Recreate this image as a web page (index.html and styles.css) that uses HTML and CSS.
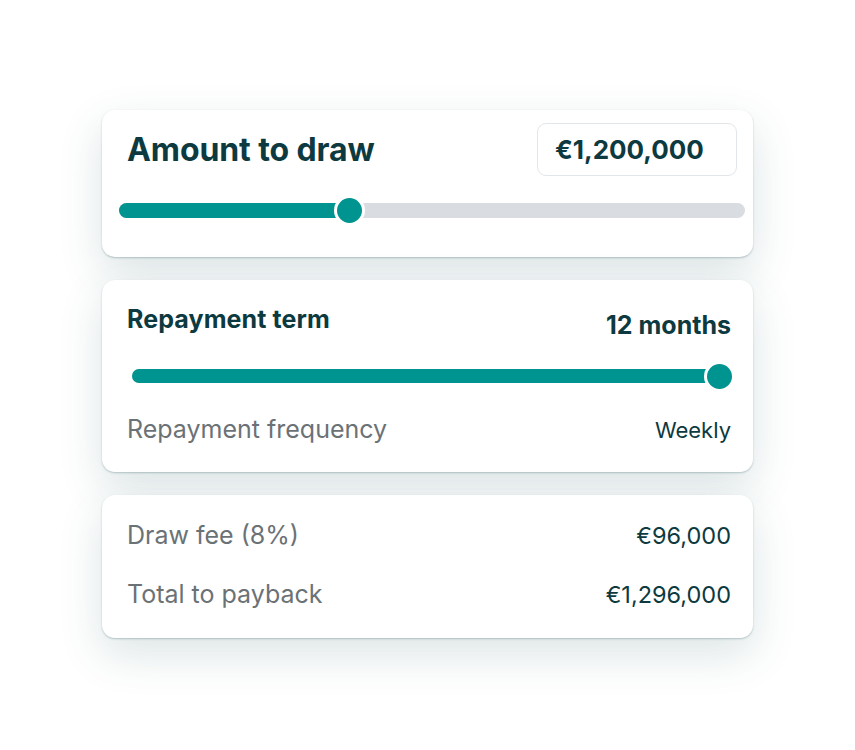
FILE: index.html
```html
<!DOCTYPE html>
<html lang="en">
<head>
    <meta charset="UTF-8">
    <meta name="viewport" content="width=device-width, initial-scale=1.0">
    <title>Draw calculator</title>
    <link rel="stylesheet" href="styles.css">
</head>
<body>
    <div class="calculator">
        <div class="card card-amount">
            <div class="amount-head">
                <h1 class="amount-title">Amount to draw</h1>
                <div class="amount-box">€1,200,000</div>
            </div>
            <div class="slider">
                <div class="slider-fill" style="width: 36.8%"></div>
                <div class="slider-thumb" style="left: 36.8%"></div>
            </div>
        </div>

        <div class="card card-term">
            <div class="term-head">
                <h2 class="term-title">Repayment term</h2>
                <div class="term-value">12 months</div>
            </div>
            <div class="slider slider-term">
                <div class="slider-fill" style="width: 100%"></div>
                <div class="slider-thumb" style="left: calc(100% - 12px)"></div>
            </div>
            <div class="row row-frequency">
                <span class="row-label">Repayment frequency</span>
                <span class="row-value">Weekly</span>
            </div>
        </div>

        <div class="card card-summary">
            <div class="row">
                <span class="row-label">Draw fee (8%)</span>
                <span class="row-value row-money">€96,000</span>
            </div>
            <div class="row">
                <span class="row-label">Total to payback</span>
                <span class="row-value row-money">€1,296,000</span>
            </div>
        </div>
    </div>
</body>
</html>
```

FILE: styles.css
```css
body {
    margin: 0;
    background-color: #ffffff;
    font-family: Inter, "Noto Sans", sans-serif;
    color: #0d3a40;
}
.calculator {
    width: 651px;
    margin-left: 102px;
    padding: 110px 0 113px;
    display: flex;
    flex-direction: column;
    gap: 23px;
}
.card {
    background-color: #ffffff;
    border-radius: 13px;
    box-shadow: 0 1px 2px rgba(40, 90, 95, 0.3), 0 16px 44px rgba(40, 90, 95, 0.16);
}
.card-amount {
    padding: 13px 8px 39px 17px;
}
.amount-head {
    display: flex;
    justify-content: space-between;
    align-items: center;
    padding: 0 8px;
    margin-bottom: 27px;
}
.amount-title {
    margin: 0;
    font-size: 32px;
    line-height: 1;
    font-weight: 700;
    letter-spacing: -0.1px;
}
.amount-box {
    width: 200px;
    height: 53px;
    box-sizing: border-box;
    border: 1px solid #e3e6e8;
    border-radius: 9px;
    padding-left: 17px;
    display: flex;
    align-items: center;
    font-size: 26px;
    line-height: 1;
    font-weight: 700;
}
.slider {
    position: relative;
    height: 15px;
    border-radius: 8px;
    background-color: #d9dde1;
}
.slider-fill {
    height: 100%;
    border-radius: 8px;
    background-color: #009490;
}
.slider-thumb {
    position: absolute;
    top: 50%;
    width: 25px;
    height: 25px;
    margin: -15.5px 0 0 -15.5px;
    border: 3px solid #ffffff;
    border-radius: 50%;
    background-color: #009490;
}
.card-term {
    padding: 27px 22px 30px 25px;
}
.term-head {
    display: flex;
    justify-content: space-between;
    align-items: flex-start;
}
.term-title {
    margin: 0;
    font-size: 25px;
    line-height: 1;
    font-weight: 700;
    letter-spacing: 0.1px;
}
.term-value {
    margin-top: 6px;
    font-size: 25px;
    line-height: 1;
    font-weight: 700;
}
.slider-term {
    height: 14px;
    margin: 31px 0 0 5px;
}
.row {
    display: flex;
    justify-content: space-between;
    align-items: baseline;
    line-height: 1;
}
.row-frequency {
    margin-top: 34px;
}
.row-label {
    font-size: 25px;
    color: #6b7276;
}
.row-value {
    font-size: 22px;
    color: #0d3a40;
}
.row-money {
    font-size: 23.5px;
}
.card-summary {
    padding: 28px 22px 31px 25px;
    display: flex;
    flex-direction: column;
    gap: 34px;
}
```
